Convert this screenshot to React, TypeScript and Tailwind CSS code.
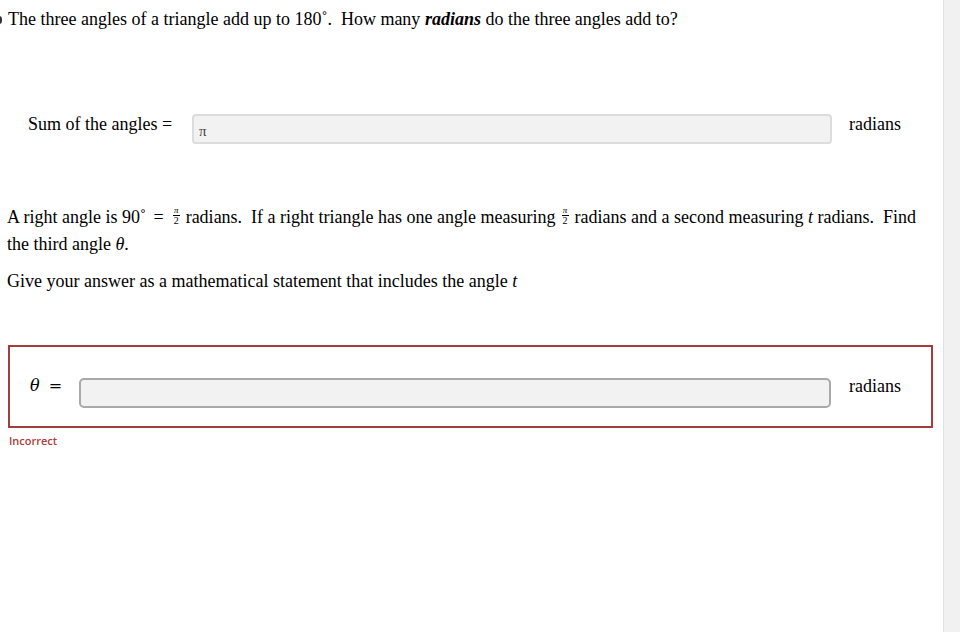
import React from "react";

const serif = { fontFamily: '"Liberation Serif", "Times New Roman", serif' };

function Frac() {
  return (
    <span className="relative top-[-3px] mx-[6px] inline-flex flex-col items-center align-middle text-[9px] leading-[8px]">
      <span className="italic">π</span>
      <span className="my-[1px] h-px w-[7px] bg-black" />
      <span className="text-[10px]">2</span>
    </span>
  );
}

export default function App() {
  return (
    <div className="flex h-[632px] w-[960px] bg-white text-black" style={serif}>
      <div className="relative flex-1">
        <div className="absolute left-[-4px] top-[16px] h-[8px] w-[6px] rounded-full bg-[#333]" />
        <p className="pl-[8px] pt-[8px] text-[18px] leading-[22px]">
          The three angles of a triangle add up to 180˚.&nbsp; How many{" "}
          <b className="italic">radians</b> do the three angles add to?
        </p>

        <div className="mt-[84px] flex items-start pl-[28px] pr-[42px]">
          <span className="mt-[-2px] w-[164px] text-[18px] leading-[24px]">Sum of the angles =</span>
          <div className="flex h-[30px] flex-1 items-center rounded-[4px] border-2 border-[#dcdcdc] bg-[#f2f2f2] pl-[5px] pt-[5px] text-[15px] text-[#444]">
            π
          </div>
          <span className="ml-[17px] mt-[-2px] text-[18px] leading-[24px]">radians</span>
        </div>

        <p className="mt-[60px] pl-[7px] pr-[4px] text-[18px] leading-[27px]">
          A right angle is 90˚ <span className="mx-[3px]">=</span>
          <Frac />
          radians.&nbsp; If a right triangle has one angle measuring
          <Frac />
          radians and a second measuring <i>t</i> radians.&nbsp; Find the
          third angle <i>θ</i>.
        </p>
        <p className="mt-[10px] pl-[7px] text-[18px] leading-[27px]">
          Give your answer as a mathematical statement that includes the
          angle <i>t</i>
        </p>

        <div className="ml-[8px] mr-[10px] mt-[50px] flex h-[83px] items-start border-2 border-[#a33c3c] pl-[20px] pr-[30px] pt-[31px]">
          <span className="mt-[-4px] w-[49px] text-[16px] leading-[24px]" style={{ fontFamily: '"DejaVu Serif", serif' }}>
            <i>θ</i>
            <span className="ml-[9px]" style={{ fontFamily: '"DejaVu Sans", sans-serif' }}>=</span>
          </span>
          <div className="h-[30px] flex-1 rounded-[5px] border-2 border-[#a9a9a9] bg-[#f2f2f2]" />
          <span className="ml-[18px] mt-[-4px] text-[18px] leading-[24px]">radians</span>
        </div>
        <div
          className="ml-[9px] mt-[5px] text-[11px] font-semibold text-[#b03a3a]"
          style={{ fontFamily: '"Open Sans", sans-serif' }}
        >
          Incorrect
        </div>
      </div>
      <div className="h-full w-[17px] border-l border-[#e2e2e2] bg-[#f1f1f1]" />
    </div>
  );
}
